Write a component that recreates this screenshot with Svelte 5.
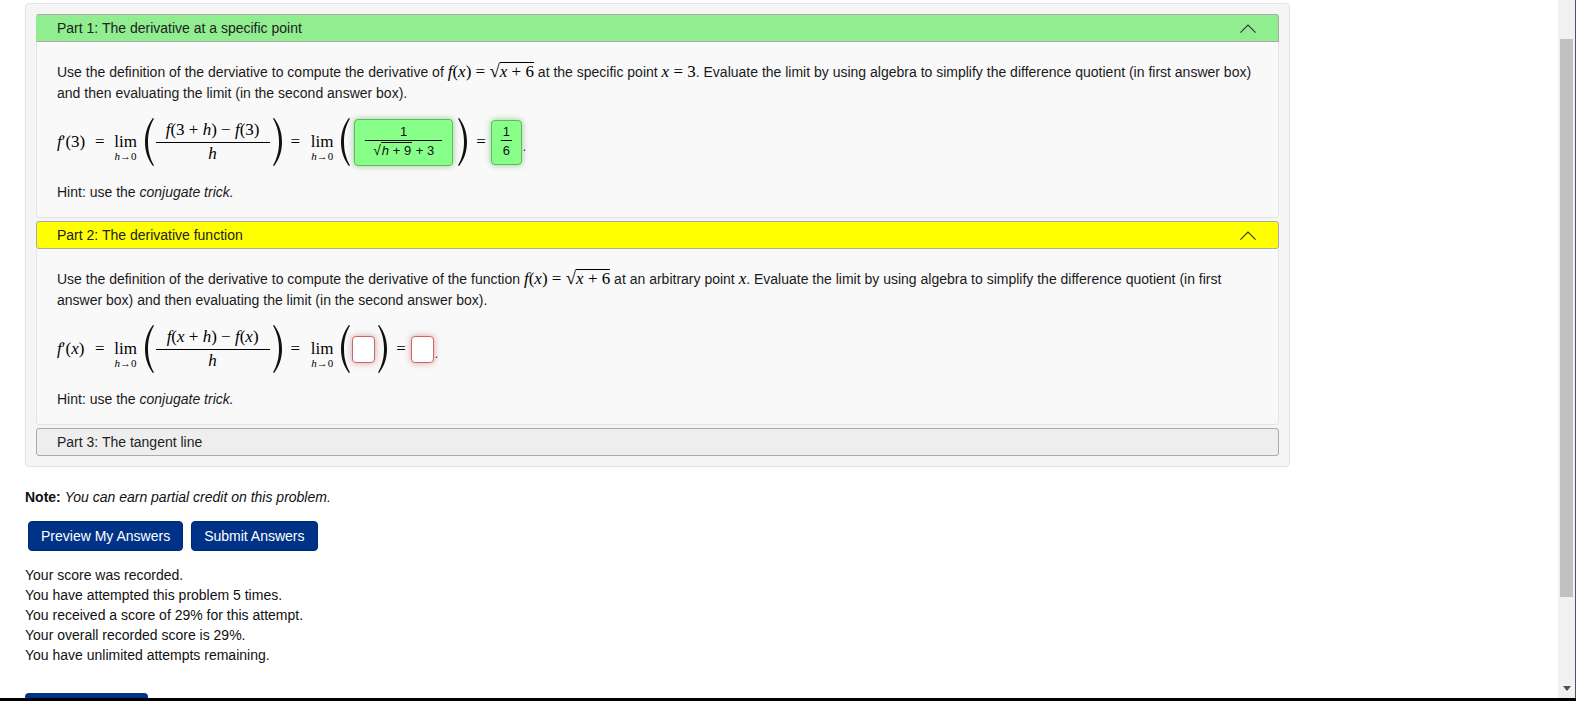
<script>
  const score = [
    'Your score was recorded.',
    'You have attempted this problem 5 times.',
    'You received a score of 29% for this attempt.',
    'Your overall recorded score is 29%.',
    'You have unlimited attempts remaining.'
  ];
</script>

{#snippet paren(flip)}
  <svg class="paren" class:flip viewBox="0 0 9 48" width="9" height="48" aria-hidden="true">
    <path d="M7.9 0C2.6 7 0 15 0 24s2.6 17 7.9 24l1.1-.6C4.8 40 3 33 3 24S4.8 8 9 .6z" fill="#111"/>
  </svg>
{/snippet}

{#snippet lim()}
  <span class="lim"><span class="lim-word">lim</span><span class="lim-sub"><i>h</i>→0</span></span>
{/snippet}

{#snippet chevron()}
  <svg class="chev" viewBox="0 0 16 9" width="16" height="9" aria-hidden="true">
    <path d="M.4 8.6 8 1l7.6 7.6" fill="none" stroke="#333" stroke-width="1.1"/>
  </svg>
{/snippet}

{#snippet sqrtX()}
  <span class="root"><span class="radical">√</span><span class="radicand"><i>x</i> + 6</span></span>
{/snippet}

<div class="page">
  <div class="main">
    <div class="content">
      <section class="well">
        <header class="head green"><span>Part 1: The derivative at a specific point</span>{@render chevron()}</header>
        <div class="body">
          <p class="lead">Use the definition of the derviative to compute the derivative of <span class="im"><i>f</i>(<i>x</i>) = {@render sqrtX()}</span> at the specific point <span class="im"><i>x</i> = 3</span>. Evaluate the limit by using algebra to simplify the difference quotient (in first answer box) and then evaluating the limit (in the second answer box).</p>
          <div class="eq">
            <span class="t"><i>f</i>′(3)</span><span class="eqs first">=</span>
            {@render lim()}
            <span class="pl">{@render paren(false)}</span>
            <span class="frac big"><span class="num"><i>f</i>(3 + <i>h</i>) − <i>f</i>(3)</span><span class="den"><i>h</i></span></span>
            <span class="pr">{@render paren(true)}</span>
            <span class="eqs">=</span>
            {@render lim()}
            <span class="pl wide">{@render paren(false)}</span>
            <span class="ans ok wide-box">
              <span class="frac small"><span class="num">1</span><span class="den"><span class="sroot">√</span><span class="over"><i>h</i> + 9</span>&nbsp;+ 3</span></span>
            </span>
            <span class="pr wide">{@render paren(true)}</span>
            <span class="eqs tight">=</span>
            <span class="ans ok one"><span class="frac small narrow"><span class="num">1</span><span class="den">6</span></span></span>
            <span class="dot">.</span>
          </div>
          <p class="hint">Hint: use the <em>conjugate trick.</em></p>
        </div>

        <header class="head yellow"><span>Part 2: The derivative function</span>{@render chevron()}</header>
        <div class="body">
          <p class="lead">Use the definition of the derivative to compute the derivative of the function <span class="im"><i>f</i>(<i>x</i>) = {@render sqrtX()}</span> at an arbitrary point <span class="im"><i>x</i></span>. Evaluate the limit by using algebra to simplify the difference quotient (in first answer box) and then evaluating the limit (in the second answer box).</p>
          <div class="eq">
            <span class="t"><i>f</i>′(<i>x</i>)</span><span class="eqs first">=</span>
            {@render lim()}
            <span class="pl">{@render paren(false)}</span>
            <span class="frac big"><span class="num"><i>f</i>(<i>x</i> + <i>h</i>) − <i>f</i>(<i>x</i>)</span><span class="den"><i>h</i></span></span>
            <span class="pr">{@render paren(true)}</span>
            <span class="eqs">=</span>
            {@render lim()}
            <span class="pl">{@render paren(false)}</span>
            <span class="ans bad"></span>
            <span class="pr">{@render paren(true)}</span>
            <span class="eqs tight">=</span>
            <span class="ans bad"></span>
            <span class="dot">.</span>
          </div>
          <p class="hint">Hint: use the <em>conjugate trick.</em></p>
        </div>

        <header class="head gray"><span>Part 3: The tangent line</span></header>
      </section>

      <p class="note"><strong>Note:</strong> <em>You can earn partial credit on this problem.</em></p>

      <div class="actions">
        <button type="button">Preview My Answers</button>
        <button type="button">Submit Answers</button>
      </div>

      <div class="score">
        {#each score as line}<div>{line}</div>{/each}
      </div>

      <div class="cut-btn"></div>
    </div>

    <div class="scrollbar">
      <div class="thumb"></div>
      <svg class="down" viewBox="0 0 8 5" width="8" height="5" aria-hidden="true"><path d="M0 0h8L4 5z" fill="#505050"/></svg>
    </div>
    <div class="edge"></div>
  </div>
  <div class="bottom"></div>
</div>

<style>
  :global(body) {
    margin: 0;
    background: #fff;
  }
  .page {
    height: 701px;
    display: flex;
    flex-direction: column;
    overflow: hidden;
    font: 14px/20px "Liberation Sans", Arial, sans-serif;
    color: #1a1a1a;
  }
  .main {
    height: 698px;
    display: flex;
    overflow: hidden;
  }
  .content {
    flex: 1;
    padding: 3px 0 0 25px;
    overflow: hidden;
  }
  .bottom {
    height: 3px;
    background: #000;
  }
  .scrollbar {
    width: 17px;
    background: #f1f1f1;
    display: flex;
    flex-direction: column;
    align-items: center;
  }
  .thumb {
    width: 13px;
    height: 558px;
    margin-top: 39px;
    background: #c1c1c1;
  }
  .down {
    margin-top: auto;
    margin-bottom: 7px;
  }
  .edge {
    width: 1px;
    background: #41586f;
  }
  .well {
    box-sizing: border-box;
    width: 1264.5px;
    height: 464px;
    padding: 10px;
    background: #f5f5f5;
    border: 1px solid #e3e3e3;
    border-radius: 4px;
  }
  .head {
    box-sizing: border-box;
    height: 28px;
    padding: 0 22px 0 20px;
    display: flex;
    align-items: center;
    justify-content: space-between;
    border: 1px solid #aaa;
    border-radius: 3px;
    color: #222;
  }
  .green { background: #90ee90; border-radius: 3px 3px 0 0; border-left-color: #90ee90; border-top-color: #aaa; }
  .yellow { background: #ff0; }
  .gray { background: #eee; }
  .body {
    box-sizing: border-box;
    height: 176px;
    padding: 19px 20px 0;
    margin-bottom: 3px;
    background: #f9f9f9;
    border: 1px solid #e5e5e5;
    border-top: 0;
    border-radius: 0 0 4px 4px;
  }
  .lead {
    margin: 0;
    line-height: 21px;
  }
  .im, .t, .eqs, .lim, .frac.big {
    font-family: "Liberation Serif", "Times New Roman", serif;
    font-size: 17px;
    color: #000;
  }
  .root {
    display: inline-flex;
    align-items: baseline;
  }
  .radical {
    font-size: 19px;
    line-height: 16px;
  }
  .radicand {
    border-top: 1px solid #000;
    line-height: 17px;
  }
  .eq {
    height: 48px;
    margin-top: 14px;
    display: flex;
    align-items: center;
  }
  .t {
    white-space: nowrap;
    width: 38px;
  }
  .eqs {
    margin: 0 10px 0 0;
  }
  .eqs.first {
    margin-right: 9px;
  }
  .eqs.tight {
    margin-right: 5px;
  }
  .lim {
    width: 24px;
    display: inline-flex;
    flex-direction: column;
    align-items: center;
    padding-top: 11px;
  }
  .lim-word {
    line-height: 16px;
  }
  .lim-sub {
    font-size: 11px;
    line-height: 12px;
    white-space: nowrap;
  }
  .paren {
    display: block;
  }
  .paren.flip {
    transform: scaleX(-1);
  }
  .pl {
    margin: 0 2px 0 7px;
  }
  .pr {
    margin: 0 9px 0 3px;
  }
  .pl.wide {
    margin: 0 4px 0 7px;
  }
  .pr.wide {
    margin: 0 9px 0 5px;
  }
  .frac {
    display: inline-flex;
    flex-direction: column;
    align-items: center;
    text-align: center;
    white-space: nowrap;
  }
  .frac.big {
    width: 114px;
  }
  .num {
    align-self: stretch;
    border-bottom: 1px solid #000;
    line-height: 21px;
    padding-bottom: 2px;
  }
  .den {
    line-height: 22px;
  }
  .frac.small {
    font-size: 13px;
    color: #111;
    width: 77px;
  }
  .frac.small .num {
    line-height: 15px;
    padding-bottom: 1px;
  }
  .frac.small .den {
    line-height: 19px;
  }
  .frac.narrow {
    width: 11px;
  }
  .sroot {
    font-size: 14px;
  }
  .over {
    border-top: 1px solid #111;
    padding: 0 1px;
  }
  .ans {
    box-sizing: border-box;
    width: 23px;
    height: 27px;
    display: inline-flex;
    align-items: center;
    justify-content: center;
    border-radius: 4px;
  }
  .ans.ok {
    background: #8f8;
    border: 1px solid #5fb95f;
    box-shadow: 0 0 6px rgba(60, 160, 60, .55);
  }
  .ans.bad {
    background: #fff;
    border: 1px solid #c66;
    box-shadow: 0 0 6px rgba(190, 70, 70, .5);
  }
  .ans.wide-box {
    width: 99px;
    height: 47px;
  }
  .ans.one {
    width: 31px;
    height: 45px;
  }
  .dot {
    align-self: flex-end;
    margin: 0 0 13px 1px;
    font-size: 12px;
    line-height: 12px;
  }
  .hint {
    margin: 16px 0 0;
  }
  .note {
    margin: 20px 0 0;
    color: #111;
  }
  .actions {
    margin: 14px 0 0 3px;
    display: flex;
    gap: 8px;
  }
  button {
    height: 30px;
    padding: 0 12px;
    font: 14px "Liberation Sans", Arial, sans-serif;
    color: #fff;
    background: #038;
    border: 1px solid #002a70;
    border-radius: 4px;
  }
  .score {
    margin-top: 14px;
    color: #111;
  }
  .cut-btn {
    width: 123px;
    height: 30px;
    margin-top: 28px;
    background: #038;
    border-radius: 4px;
  }
</style>
